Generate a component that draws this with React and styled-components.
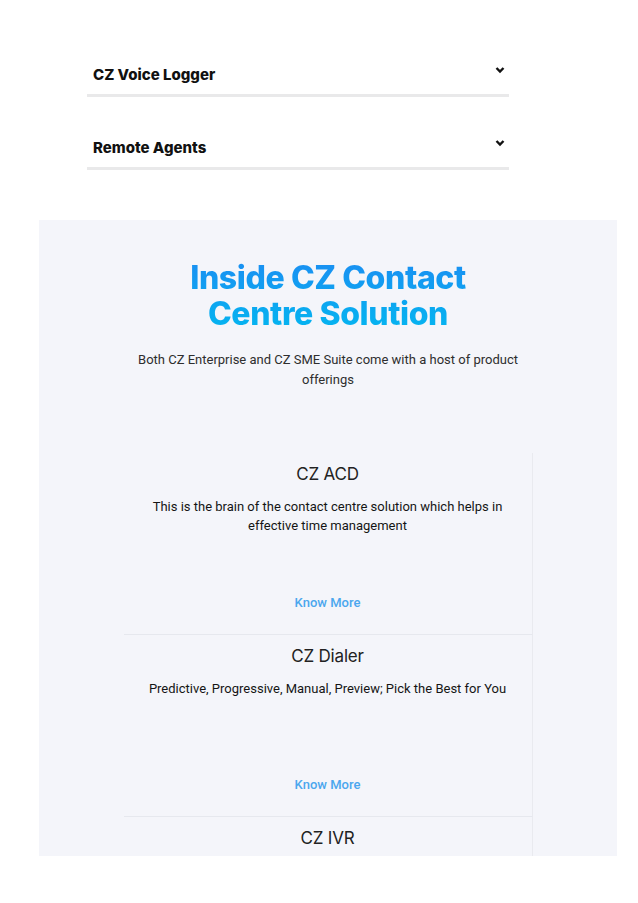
import styled, { createGlobalStyle } from 'styled-components';

const GlobalStyle = createGlobalStyle`
  body {
    margin: 0;
    background: #fff;
    font-family: Roboto, "Liberation Sans", sans-serif;
  }
`;

const Page = styled.div`
  width: 638px;
  padding-top: 51px;
`;

const Accordion = styled.div`
  width: 422px;
  margin-left: 87px;
  display: flex;
  flex-direction: column;
  gap: 27px;
`;

const Item = styled.div`
  border-bottom: 3px solid #e9e9ea;
`;

const ItemHeader = styled.div`
  display: flex;
  justify-content: space-between;
  align-items: flex-start;
  padding: 12px 4px 7px 6px;
`;

const ItemTitle = styled.span`
  font-family: Inter, "Noto Sans", sans-serif;
  font-weight: 800;
  font-size: 15px;
  line-height: 24px;
  color: #111;
`;

const Chevron = styled.svg`
  width: 10px;
  height: 8px;
  margin-top: 3px;
`;

const Section = styled.section`
  margin: 50px 21px 0 39px;
  height: 636px;
  overflow: hidden;
  background: #f4f5fa;
  padding-top: 40px;
  box-sizing: border-box;
  display: flex;
  flex-direction: column;
  align-items: center;
`;

const Heading = styled.h2`
  margin: 0;
  font-family: Inter, "Noto Sans", sans-serif;
  font-weight: 800;
  font-size: 32px;
  line-height: 36px;
  letter-spacing: -0.4px;
  text-align: center;
  background: linear-gradient(180deg, #1a8ff2 0%, #03b6f0 100%);
  -webkit-background-clip: text;
  background-clip: text;
  color: transparent;
`;

const Lead = styled.p`
  margin: 18px 0 0;
  width: 400px;
  font-size: 13px;
  line-height: 20px;
  color: #2e2e2e;
  text-align: center;
`;

const Cards = styled.div`
  margin-top: 63px;
  width: 409px;
  display: flex;
  flex-direction: column;
`;

const Card = styled.div`
  height: 182px;
  box-sizing: border-box;
  border-right: 1px solid #e9eaef;
  border-bottom: 1px solid #e6e8ee;
  padding: 9px 14px 21px;
  display: flex;
  flex-direction: column;
  align-items: center;
`;

const CardTitle = styled.h3`
  margin: 0;
  font-family: Inter, "Noto Sans", sans-serif;
  font-weight: 400;
  font-size: 17px;
  line-height: 24px;
  letter-spacing: -0.2px;
  color: #222;
`;

const CardText = styled.p`
  margin: 11px 0 0;
  font-size: 13px;
  line-height: 19px;
  color: #151515;
  text-align: center;
`;

const KnowMore = styled.a`
  margin-top: auto;
  font-size: 13px;
  line-height: 20px;
  font-weight: 500;
  color: #4ba7ee;
  text-decoration: none;
`;

const faqs = ['CZ Voice Logger', 'Remote Agents'];

const products = [
  {
    title: 'CZ ACD',
    text: 'This is the brain of the contact centre solution which helps in effective time management',
  },
  {
    title: 'CZ Dialer',
    text: 'Predictive, Progressive, Manual, Preview; Pick the Best for You',
  },
  { title: 'CZ IVR', text: '' },
];

const App = () => {
  return (
    <Page>
      <GlobalStyle />
      <Accordion>
        {faqs.map((q) => (
          <Item key={q}>
            <ItemHeader>
              <ItemTitle>{q}</ItemTitle>
              <Chevron viewBox="0 0 10 8">
                <path d="M1.5 2l3.5 3.5L8.5 2" fill="none" stroke="#111" strokeWidth="2.4" />
              </Chevron>
            </ItemHeader>
          </Item>
        ))}
      </Accordion>

      <Section>
        <Heading>
          Inside CZ Contact
          <br />
          Centre Solution
        </Heading>
        <Lead>Both CZ Enterprise and CZ SME Suite come with a host of product offerings</Lead>
        <Cards>
          {products.map((p) => (
            <Card key={p.title}>
              <CardTitle>{p.title}</CardTitle>
              {p.text && <CardText>{p.text}</CardText>}
              <KnowMore href="#">Know More</KnowMore>
            </Card>
          ))}
        </Cards>
      </Section>
    </Page>
  );
};

export default App;
